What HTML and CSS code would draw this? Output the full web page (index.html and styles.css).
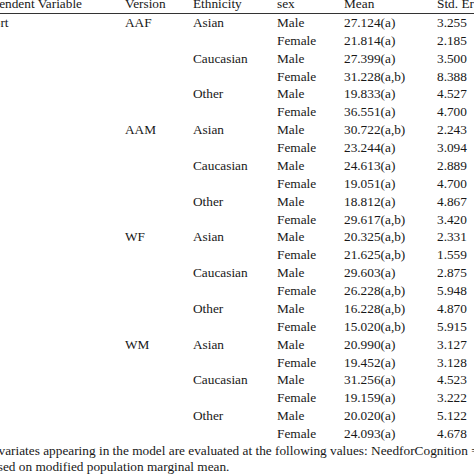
FILE: index.html
```html
<!DOCTYPE html>
<html>
<head>
<meta charset="utf-8">
<link rel="stylesheet" href="styles.css">
</head>
<body>
<div class="page">
<table class="stats">
<thead>
<tr><th class="c1">Dependent Variable</th><th class="c2">Version</th><th class="c3">Ethnicity</th><th class="c4">sex</th><th class="c5">Mean</th><th class="c6">Std. Error</th></tr>
</thead>
<tbody>
<tr><td>Effort</td><td>AAF</td><td>Asian</td><td>Male</td><td>27.124(a)</td><td>3.255</td></tr>
<tr><td></td><td></td><td></td><td>Female</td><td>21.814(a)</td><td>2.185</td></tr>
<tr><td></td><td></td><td>Caucasian</td><td>Male</td><td>27.399(a)</td><td>3.500</td></tr>
<tr><td></td><td></td><td></td><td>Female</td><td>31.228(a,b)</td><td>8.388</td></tr>
<tr><td></td><td></td><td>Other</td><td>Male</td><td>19.833(a)</td><td>4.527</td></tr>
<tr><td></td><td></td><td></td><td>Female</td><td>36.551(a)</td><td>4.700</td></tr>
<tr><td></td><td>AAM</td><td>Asian</td><td>Male</td><td>30.722(a,b)</td><td>2.243</td></tr>
<tr><td></td><td></td><td></td><td>Female</td><td>23.244(a)</td><td>3.094</td></tr>
<tr><td></td><td></td><td>Caucasian</td><td>Male</td><td>24.613(a)</td><td>2.889</td></tr>
<tr><td></td><td></td><td></td><td>Female</td><td>19.051(a)</td><td>4.700</td></tr>
<tr><td></td><td></td><td>Other</td><td>Male</td><td>18.812(a)</td><td>4.867</td></tr>
<tr><td></td><td></td><td></td><td>Female</td><td>29.617(a,b)</td><td>3.420</td></tr>
<tr><td></td><td>WF</td><td>Asian</td><td>Male</td><td>20.325(a,b)</td><td>2.331</td></tr>
<tr><td></td><td></td><td></td><td>Female</td><td>21.625(a,b)</td><td>1.559</td></tr>
<tr><td></td><td></td><td>Caucasian</td><td>Male</td><td>29.603(a)</td><td>2.875</td></tr>
<tr><td></td><td></td><td></td><td>Female</td><td>26.228(a,b)</td><td>5.948</td></tr>
<tr><td></td><td></td><td>Other</td><td>Male</td><td>16.228(a,b)</td><td>4.870</td></tr>
<tr><td></td><td></td><td></td><td>Female</td><td>15.020(a,b)</td><td>5.915</td></tr>
<tr><td></td><td>WM</td><td>Asian</td><td>Male</td><td>20.990(a)</td><td>3.127</td></tr>
<tr><td></td><td></td><td></td><td>Female</td><td>19.452(a)</td><td>3.128</td></tr>
<tr><td></td><td></td><td>Caucasian</td><td>Male</td><td>31.256(a)</td><td>4.523</td></tr>
<tr><td></td><td></td><td></td><td>Female</td><td>19.159(a)</td><td>3.222</td></tr>
<tr><td></td><td></td><td>Other</td><td>Male</td><td>20.020(a)</td><td>5.122</td></tr>
<tr><td></td><td></td><td></td><td>Female</td><td>24.093(a)</td><td>4.678</td></tr>
</tbody>
</table>
<div class="notes">
<p>Covariates appearing in the model are evaluated at the following values: NeedforCognition = 3.12.</p>
<p>Based on modified population marginal mean.</p>
</div>
</div>
</body>
</html>
```
FILE: styles.css
```css
html, body {
  margin: 0;
  padding: 0;
  background: #ffffff;
  overflow: hidden;
}
body {
  width: 474px;
  height: 474px;
  font-family: "Liberation Serif", "Times New Roman", serif;
  font-size: 13.3px;
  color: #181818;
}
.page {
  margin: -5px 0 0 -23px;
  width: 560px;
}
.stats {
  border-collapse: collapse;
  table-layout: fixed;
  width: 560px;
}
.stats th, .stats td {
  padding: 0;
  height: 17.87px;
  line-height: 17.87px;
  text-align: left;
  font-weight: normal;
  white-space: nowrap;
  vertical-align: middle;
}
.stats thead th {
  border-bottom: 1px solid #333333;
  height: 17px;
}
.c1 { width: 148px; }
.c2 { width: 68px; }
.c3 { width: 84px; }
.c4 { width: 67px; }
.c5 { width: 93px; }
.c6 { width: 100px; }
.notes {
  margin-left: 6px;
}
.notes p {
  margin: 0;
  line-height: 16px;
  white-space: nowrap;
}
```
